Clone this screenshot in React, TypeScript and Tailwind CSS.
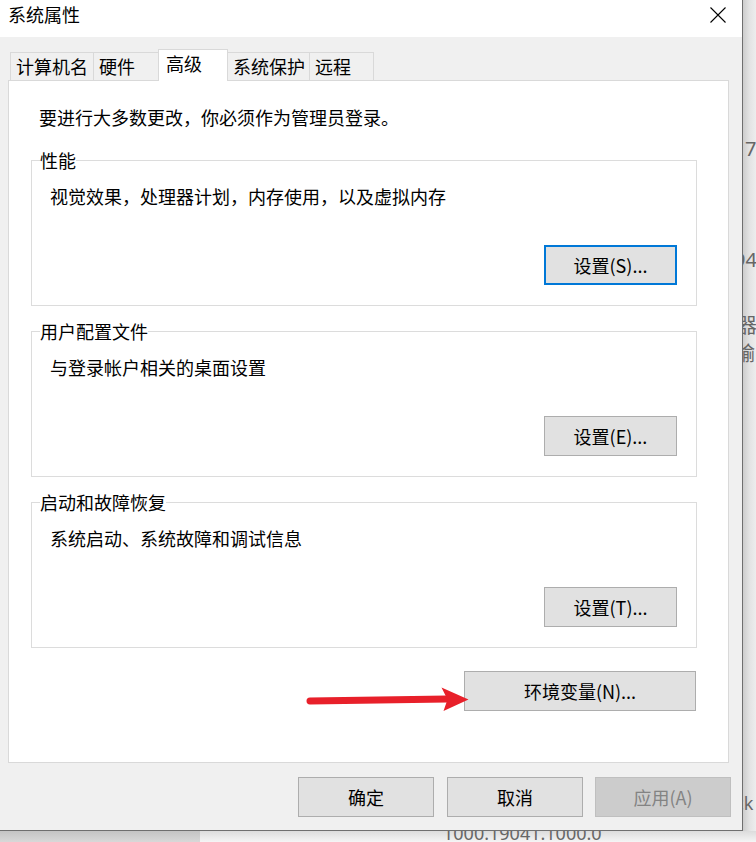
import React from 'react'

type BtnProps = {
  label: string
  width: string
  focused?: boolean
  disabled?: boolean
}

function WinButton({ label, width, focused = false, disabled = false }: BtnProps) {
  let look = 'bg-[#e1e1e1] border border-[#adadad] text-black'
  if (focused) look = 'bg-[#e1e1e1] border-2 border-[#0078d7] text-black'
  if (disabled) look = 'bg-[#cccccc] border border-[#bfbfbf] text-[#838383]'
  return (
    <div className={`${width} h-[40px] flex items-center justify-center text-[18px] leading-[24px] ${look}`}>
      {label}
    </div>
  )
}

function Group({ title, desc, button, focused }: { title: string; desc: string; button: string; focused?: boolean }) {
  return (
    <fieldset className="m-0 p-0 pb-[20px] border border-[#dcdcdc] min-w-0">
      <legend className="ml-[8px] px-0 text-[18px] leading-[25px]">{title}</legend>
      <div className="ml-[18px] mt-[11px] text-[18px] leading-[24px]">{desc}</div>
      <div className="flex justify-end pr-[19px] mt-[37px]">
        <WinButton label={button} width="w-[133px]" focused={focused} />
      </div>
    </fieldset>
  )
}

function Tab({ label, width, edge }: { label: string; width: string; edge: string }) {
  return (
    <div className={`${width} h-[28px] ${edge} border-[#d9d9d9] pl-[5px] pt-[1px] text-[18px] leading-[24px] whitespace-nowrap`}>
      {label}
    </div>
  )
}

function RedArrow() {
  // annotation drawn over the dialog
  return (
    <svg
      className="absolute left-[300px] top-[680px] w-[175px] h-[40px]"
      viewBox="300 680 175 40"
    >
      <line x1="310" y1="701" x2="447" y2="699" stroke="#e8202a" strokeWidth="7" strokeLinecap="round" />
      <path d="M441.5 687.5 L468.5 699.5 L443.5 711 L447.5 699.5 Z" fill="#e8202a" />
    </svg>
  )
}

export default function App() {
  return (
    <div className="w-[756px] h-[842px] overflow-hidden flex flex-col font-['Noto_Sans_CJK_SC',sans-serif] text-black">
      <div className="flex h-[831px]">
        <div className="relative w-[743px] h-[831px] shrink-0 flex flex-col bg-[#f0f0f0] border-r border-b border-[#6f6f6f]">
          {/* title bar */}
          <div className="h-[37px] bg-white flex justify-between items-start">
            <div className="pl-[8px] pt-[2px] text-[18px] leading-[24px]">系统属性</div>
            <svg className="mt-[7px] mr-[16px] w-[16px] h-[16px]" viewBox="0 0 16 16">
              <path d="M0.5 0.5 L15.5 15.5 M15.5 0.5 L0.5 15.5" stroke="#000" strokeWidth="1.1" fill="none" />
            </svg>
          </div>

          {/* tabs */}
          <div className="h-[43px] flex items-end pl-[10px]">
            <Tab label="计算机名" width="w-[83px]" edge="border-t border-l" />
            <Tab label="硬件" width="w-[65px]" edge="border-t border-l" />
            <div className="relative z-10 w-[70px] h-[32px] mb-[-1px] bg-white border-t border-l border-r border-[#d9d9d9] pl-[7px] pt-[1px] text-[18px] leading-[24px]">
              高级
            </div>
            <Tab label="系统保护" width="w-[81px]" edge="border-t" />
            <Tab label="远程" width="w-[65px]" edge="border-t border-l border-r" />
          </div>

          {/* panel */}
          <div className="ml-[8px] w-[721px] bg-white border border-[#d9d9d9] pt-[24px] pb-[51px] pl-[22px] pr-[31px] flex flex-col">
            <div className="ml-[8px] text-[18px] leading-[24px]">要进行大多数更改，你必须作为管理员登录。</div>
            <div className="mt-[19px]">
              <Group title="性能" desc="视觉效果，处理器计划，内存使用，以及虚拟内存" button="设置(S)..." focused />
            </div>
            <div className="mt-[13px]">
              <Group title="用户配置文件" desc="与登录帐户相关的桌面设置" button="设置(E)..." />
            </div>
            <div className="mt-[13px]">
              <Group title="启动和故障恢复" desc="系统启动、系统故障和调试信息" button="设置(T)..." />
            </div>
            <div className="mt-[23px] flex justify-end pr-[1px]">
              <WinButton label="环境变量(N)..." width="w-[232px]" />
            </div>
          </div>

          {/* footer buttons */}
          <div className="mt-[14px] flex justify-end pr-[11px]">
            <WinButton label="确定" width="w-[136px]" />
            <div className="ml-[13px]">
              <WinButton label="取消" width="w-[136px]" />
            </div>
            <div className="ml-[12px]">
              <WinButton label="应用(A)" width="w-[136px]" disabled />
            </div>
          </div>

          <RedArrow />
        </div>

        {/* what shows of the window behind, right side */}
        <div className="w-[13px] h-[831px] overflow-hidden bg-gradient-to-r from-[#cdcdcd] via-[#e3e3e3] to-[#ededed] text-[#666666] whitespace-nowrap">
          <div className="mt-[139px] ml-[2px] font-['Noto_Sans',sans-serif] text-[20px] leading-[20px]">74</div>
          <div className="mt-[91px] ml-[-9px] font-['Noto_Sans',sans-serif] text-[20px] leading-[20px]">94</div>
          <div className="mt-[45px] ml-[-6px] text-[20px] leading-[20px]">器</div>
          <div className="mt-[8px] ml-[-8px] text-[20px] leading-[20px]">输</div>
          <div className="mt-[431px] ml-[-8px] font-['Noto_Sans',sans-serif] text-[18px] leading-[18px]">ck</div>
        </div>
      </div>

      {/* bottom strip behind the window */}
      <div className="h-[11px] flex">
        <div className="w-[200px] bg-gradient-to-b from-[#c4c4c4] to-[#d8d8d8]" />
        <div className="flex-1 overflow-hidden bg-gradient-to-b from-[#dcdcdc] to-[#f5f5f5] text-[#666666] whitespace-nowrap">
          <div className="mt-[-7px] ml-[243px] font-['Noto_Sans',sans-serif] text-[18px] leading-[18px]">1000.19041.1000.0</div>
        </div>
      </div>
    </div>
  )
}
